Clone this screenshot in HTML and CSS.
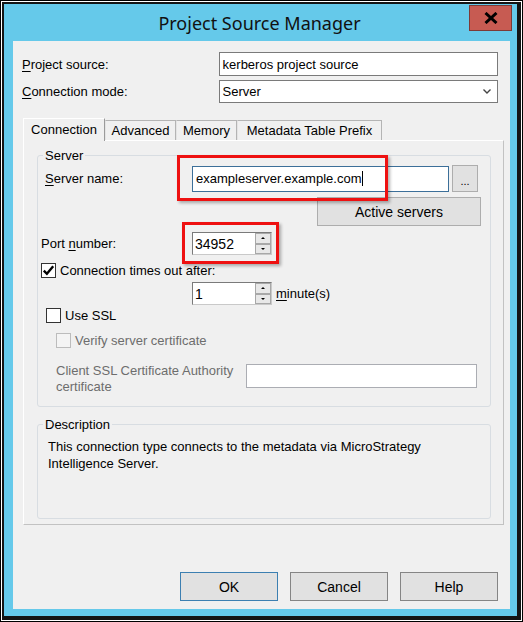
FILE: index.html
```html
<!DOCTYPE html>
<html lang="en">
<head>
    <meta charset="UTF-8">
    <meta name="viewport" content="width=device-width, initial-scale=1.0">
    <title>Project Source Manager</title>
    <link rel="stylesheet" href="styles.css">
</head>
<body>
    <div class="screen">
        <div class="window">
            <!-- Title bar -->
            <div class="titlebar">
                <div class="title">Project Source Manager</div>
                <button class="close" aria-label="Close">
                    <svg width="14" height="12" viewBox="0 0 14 12"><path d="M1.5 1 L12.5 11 M12.5 1 L1.5 11" stroke="#000" stroke-width="3" fill="none"/></svg>
                </button>
            </div>

            <div class="panel">
                <div class="field-row">
                    <label class="field-label"><u>P</u>roject source:</label>
                    <div class="textbox">kerberos project source</div>
                </div>
                <div class="field-row row-mode">
                    <label class="field-label"><u>C</u>onnection mode:</label>
                    <div class="textbox combo">
                        <span>Server</span>
                        <svg width="8" height="5" viewBox="0 0 8 5"><polyline points="0.5,0.5 4,4 7.5,0.5" stroke="#444" stroke-width="1.4" fill="none"/></svg>
                    </div>
                </div>

                <!-- Tabs -->
                <div class="tabs">
                    <div class="tab active tab-connection">Connection</div>
                    <div class="tab tab-advanced">Advanced</div>
                    <div class="tab tab-memory">Memory</div>
                    <div class="tab tab-prefix">Metadata Table Prefix</div>
                </div>

                <div class="tab-page">
                    <!-- Server group -->
                    <div class="group group-server">
                        <span class="legend">Server</span>

                        <div class="row row-server">
                            <label class="row-label server-label"><u>S</u>erver name:</label>
                            <div class="input focused">exampleserver.example.com<span class="caret"></span></div>
                            <button class="btn dots">...</button>
                        </div>
                        <div class="row row-active">
                            <button class="btn active-servers">Active servers</button>
                        </div>
                        <div class="row row-port">
                            <label class="row-label port-label">Port <u>n</u>umber:</label>
                            <div class="spinbox">
                                <span class="spin-value">34952</span>
                                <div class="spin-btns">
                                    <span class="spin-up"><i></i></span>
                                    <span class="spin-down"><i></i></span>
                                </div>
                            </div>
                        </div>
                        <div class="row row-timeout">
                            <span class="check checked">
                                <svg width="13" height="13" viewBox="0 0 13 13"><path d="M1.8 6.6 L4.9 9.8 L11.2 2.2" stroke="#000" stroke-width="2.4" fill="none"/></svg>
                            </span>
                            <span class="check-label">Connection times out after:</span>
                        </div>
                        <div class="row row-minutes">
                            <div class="spinbox">
                                <span class="spin-value">1</span>
                                <div class="spin-btns">
                                    <span class="spin-up"><i></i></span>
                                    <span class="spin-down"><i></i></span>
                                </div>
                            </div>
                            <span class="unit"><u>m</u>inute(s)</span>
                        </div>
                        <div class="row row-ssl">
                            <span class="check"></span>
                            <span class="check-label">Use SSL</span>
                        </div>
                        <div class="row row-verify">
                            <span class="check disabled"></span>
                            <span class="check-label muted">Verify server certificate</span>
                        </div>
                        <div class="row row-client">
                            <span class="client-label muted">Client SSL Certificate Authority certificate</span>
                            <div class="input plain"></div>
                        </div>

                        <!-- highlight frames -->
                        <div class="mark mark-server"></div>
                        <div class="mark mark-port"></div>
                    </div>

                    <!-- Description group -->
                    <div class="group group-desc">
                        <span class="legend">Description</span>
                        <p class="desc">This connection type connects to the metadata via MicroStrategy<br>Intelligence Server.</p>
                    </div>
                </div>

                <div class="actions">
                    <button class="btn dialog-btn default">OK</button>
                    <button class="btn dialog-btn">Cancel</button>
                    <button class="btn dialog-btn">Help</button>
                </div>
            </div>
        </div>
    </div>
</body>
</html>
```

FILE: styles.css
```css
* {
    box-sizing: border-box;
}
body {
    margin: 0;
    background: #fff;
    font-family: "Liberation Sans", Arial, sans-serif;
    font-size: 13px;
    color: #000;
}
u {
    text-decoration-thickness: 1px;
    text-underline-offset: 2px;
}
.screen {
    width: 523px;
    height: 622px;
    border: 1px solid #000;
    padding: 1px;
    background: #fff;
}
.window {
    height: 100%;
    border: 2px solid #141414;
    border-right-width: 4px;
    border-bottom-width: 4px;
    background: #65c9ea;
    padding: 0 7px 0 9px;
}

/* title bar */
.titlebar {
    height: 37px;
    margin: 0 -2px 0 -9px;
    display: grid;
    grid-template-columns: 1fr auto 1fr;
}
.title {
    grid-column: 2;
    align-self: center;
    font-family: "Noto Sans", "Open Sans", sans-serif;
    font-size: 18px;
    color: #111;
    padding: 1px 0 0 3px;
}
.close {
    grid-column: 3;
    justify-self: end;
    align-self: start;
    margin-top: 1px;
    width: 43px;
    height: 26px;
    padding: 0;
    border: 1px solid #7d3a36;
    background: #c75b52;
    display: flex;
    align-items: center;
    justify-content: center;
}

/* dialog body */
.panel {
    height: 568px;
    background: #f0f0f0;
    padding: 11px 12px 0 9px;
}
.field-row {
    display: flex;
    align-items: center;
    height: 24px;
}
.field-label {
    width: 197px;
}
.textbox {
    width: 280px;
    height: 24px;
    border: 1px solid #7a7a7a;
    background: #fff;
    padding-left: 3px;
    display: flex;
    align-items: center;
}
.row-mode {
    margin-top: 4px;
    height: 23px;
}
.row-mode .textbox {
    height: 23px;
}
.combo {
    justify-content: space-between;
    padding-right: 6px;
}

/* tabs */
.tabs {
    position: relative;
    z-index: 1;
    display: flex;
    align-items: flex-end;
    height: 22px;
    margin: 15px 0 0 1px;
}
.tab {
    height: 20px;
    border: 1px solid #b4b4b4;
    border-bottom: none;
    border-left-color: #e4e4e4;
    background: #f0f0f0;
    text-align: center;
    line-height: 19px;
}
.tab.active {
    height: 23px;
    margin-bottom: -1px;
    line-height: 21px;
    border-left-color: #fff;
    border-top-color: #fff;
    border-right-color: #9a9a9a;
}
.tab-connection { width: 82px; }
.tab-advanced { width: 71px; }
.tab-memory { width: 61px; }
.tab-prefix { width: 145px; }

.tab-page {
    width: 481px;
    height: 385px;
    margin-left: 1px;
    border: 1px solid #c2c2c2;
    border-left-color: #fff;
    border-top-color: #fff;
    padding: 14px 0 0 13px;
}

/* group boxes */
.group {
    position: relative;
    width: 454px;
    border: 1px solid #d8dde2;
    border-radius: 3px;
}
.group-server {
    height: 252px;
}
.group-desc {
    height: 95px;
    margin-top: 17px;
}
.legend {
    position: absolute;
    top: -8px;
    left: 5px;
    padding: 0 2px;
    line-height: 15px;
    background: #f0f0f0;
}
.row {
    display: flex;
    align-items: center;
}
.row-label {
    flex: none;
}
.row-server {
    height: 27px;
    margin-top: 9px;
}
.server-label {
    margin-left: 7px;
    width: 147px;
}
.input {
    height: 26px;
    background: #fff;
    border: 1px solid #7a7a7a;
    display: flex;
    align-items: center;
    padding-left: 3px;
}
.focused {
    width: 257px;
    border-color: #3c6f99;
}
.caret {
    width: 1px;
    height: 15px;
    background: #000;
    margin-left: 1px;
}
.btn {
    font-family: "Liberation Sans", Arial, sans-serif;
    font-size: 13px;
    color: #000;
    background: #e1e1e1;
    border: 1px solid #adadad;
    padding: 0;
}
.dots {
    width: 26px;
    height: 27px;
    margin-left: 3px;
    padding-top: 4px;
    font-size: 11px;
}
.row-active {
    margin-top: 5px;
    margin-left: 279px;
}
.active-servers {
    width: 164px;
    height: 29px;
    font-size: 14px;
}
.row-port {
    height: 23px;
    margin-top: 6px;
}
.port-label {
    margin-left: 3px;
    width: 151px;
}
.spinbox {
    width: 80px;
    height: 23px;
    border: 1px solid #7a7a7a;
    border-right-color: #c9c9c9;
    border-bottom-color: #c9c9c9;
    background: #fff;
    display: flex;
    justify-content: space-between;
}
.spin-value {
    padding: 3px 0 0 2px;
    line-height: 16px;
    font-size: 14px;
}
.spin-btns {
    width: 16px;
    display: flex;
    flex-direction: column;
}
.spin-btns span {
    flex: 1;
    border: 1px solid #a8a8a8;
    background: #e8e8e8;
    display: flex;
    align-items: center;
    justify-content: center;
}
.spin-up i {
    border-left: 2px solid transparent;
    border-right: 2px solid transparent;
    border-bottom: 2px solid #000;
}
.spin-down i {
    border-left: 2px solid transparent;
    border-right: 2px solid transparent;
    border-top: 2px solid #000;
}
.row-timeout {
    height: 15px;
    margin: 8px 0 0 3px;
}
.check {
    width: 15px;
    height: 15px;
    border: 1px solid #333;
    background: #fff;
    display: flex;
    align-items: center;
    justify-content: center;
    flex: none;
}
.check.disabled {
    border-color: #bcbcbc;
    background: #f4f4f4;
}
.check-label {
    margin-left: 4px;
}
.muted {
    color: #6d6d6d;
}
.row-minutes {
    height: 23px;
    margin: 4px 0 0 154px;
}
.unit {
    margin-left: 4px;
}
.row-ssl {
    height: 15px;
    margin: 3px 0 0 8px;
}
.row-verify {
    height: 15px;
    margin: 10px 0 0 18px;
}
.row-client {
    align-items: flex-start;
    margin: 16px 0 0 18px;
}
.client-label {
    width: 190px;
    line-height: 16px;
    margin-top: -1px;
}
.input.plain {
    width: 231px;
    height: 24px;
    border-color: #abadb3;
}

/* red highlight frames */
.mark {
    position: absolute;
    border: 3px solid #ee1111;
    box-shadow: 2px 2px 3px rgba(0, 0, 0, 0.3);
}
.mark-server {
    left: 139px;
    top: -1px;
    width: 211px;
    height: 46px;
}
.mark-port {
    left: 144px;
    top: 66px;
    width: 97px;
    height: 42px;
}

.desc {
    margin: 0;
    padding: 13px 0 0 10px;
    line-height: 17px;
}

/* dialog buttons */
.actions {
    display: flex;
    justify-content: flex-end;
    gap: 12px;
    margin-top: 47px;
}
.dialog-btn {
    width: 98px;
    height: 29px;
    border-color: #858585;
    font-size: 14px;
}
.dialog-btn.default {
    border-color: #3c7fb1;
}
```
